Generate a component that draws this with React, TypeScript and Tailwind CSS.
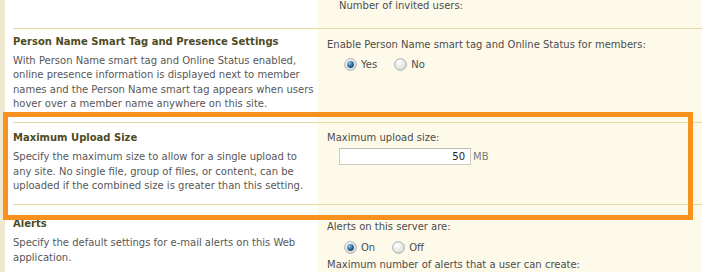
import React from 'react'

function Radio({ checked }: { checked?: boolean }) {
  return (
    <svg width="13" height="13" viewBox="0 0 13 13" className="shrink-0">
      <defs>
        <radialGradient id="rbg" cx="0.35" cy="0.3" r="0.8">
          <stop offset="0" stopColor="#ffffff" />
          <stop offset="1" stopColor="#d8d8d2" />
        </radialGradient>
        <radialGradient id="rdot" cx="0.35" cy="0.3" r="0.8">
          <stop offset="0" stopColor="#8cc6ec" />
          <stop offset="0.6" stopColor="#2a6a9c" />
          <stop offset="1" stopColor="#163f63" />
        </radialGradient>
      </defs>
      <circle cx="6.5" cy="6.5" r="5.8" fill="url(#rbg)" stroke="#a4acb4" strokeWidth="1" />
      {checked && <circle cx="6.5" cy="6.5" r="3.4" fill="url(#rdot)" />}
    </svg>
  )
}

function RadioPair({ a, b }: { a: string; b: string }) {
  return (
    <div className="flex items-center ml-[17px] text-[#4c4c4c]">
      <Radio checked />
      <span className="ml-[4px]">{a}</span>
      <span className="ml-[17px]"><Radio /></span>
      <span className="ml-[4px]">{b}</span>
    </div>
  )
}

type SectionProps = {
  title: string
  desc: React.ReactNode
  height: string
  pad: string
  children: React.ReactNode
}

function Section({ title, desc, height, pad, children }: SectionProps) {
  return (
    <div className={`flex ${height}`}>
      <div className="w-[313px] shrink-0 pl-[8px]">
        <div className={`h-full border-t border-[#e4dba2] ${pad} pr-[2px]`}>
          <div className="font-bold text-[#4f4b1f] leading-[14px]">{title}</div>
          <div className="mt-[5px] text-[#575757] leading-[14.5px]">{desc}</div>
        </div>
      </div>
      <div className={`flex-1 bg-[#fdfaea] border-t border-[#e4dba2] pl-[9px] ${pad}`}>
        {children}
      </div>
    </div>
  )
}

export default function App() {
  return (
    <div className="relative w-[702px] h-[272px] overflow-hidden bg-white flex font-['DejaVu_Sans',sans-serif] text-[10px]">
      <div className="w-[5px] shrink-0 bg-[#efe9cf]" />
      <div className="flex-1 flex flex-col">
        <div className="flex h-[29px]">
          <div className="w-[313px] shrink-0" />
          <div className="flex-1 bg-[#fdfaea] pl-[21px] text-[#4c4c4c] leading-[12px]">
            Number of invited users:
          </div>
        </div>

        <Section
          title="Person Name Smart Tag and Presence Settings"
          height="h-[98px]"
          pad="pt-[6px]"
          desc={
            <>
              With Person Name smart tag and Online Status enabled, online presence information is
              displayed next to member names and the Person Name smart tag appears when users hover
              over a member name anywhere on this site.
            </>
          }
        >
          <div className="text-[#4c4c4c] leading-[14px] pt-[3px]">
            Enable Person Name smart tag and Online Status for members:
          </div>
          <div className="mt-[5px]">
            <RadioPair a="Yes" b="No" />
          </div>
        </Section>

        <Section
          title="Maximum Upload Size"
          height="h-[85px]"
          pad="pt-[8px]"
          desc={
            <>
              Specify the maximum size to allow for a single upload to any site. No single file,
              group of files, or content, can be uploaded if the combined size is greater than this
              setting.
            </>
          }
        >
          <div className="text-[#4c4c4c] leading-[14px]">Maximum upload size:</div>
          <div className="flex items-center ml-[12px] mt-[3px]">
            <div className="w-[132px] h-[17px] bg-white border border-[#cdccc4] border-t-[#bdbcb3] text-right pr-[5px] leading-[15px] text-[#222]">
              50
            </div>
            <span className="ml-[2px] text-[#7a7a7a]">MB</span>
          </div>
        </Section>

        <Section
          title="Alerts"
          height="flex-1"
          pad="pt-[12px]"
          desc={<>Specify the default settings for e-mail alerts on this Web application.</>}
        >
          <div className="text-[#4c4c4c] leading-[14px] pt-[3px]">Alerts on this server are:</div>
          <div className="mt-[6px]">
            <RadioPair a="On" b="Off" />
          </div>
          <div className="mt-[3px] text-[#4c4c4c] leading-[14px]">
            Maximum number of alerts that a user can create:
          </div>
        </Section>
      </div>

      {/* highlight annotation */}
      <div className="absolute left-[3px] top-[112px] w-[690px] h-[108px] border-[5px] border-[#f7921e] pointer-events-none" />
    </div>
  )
}
